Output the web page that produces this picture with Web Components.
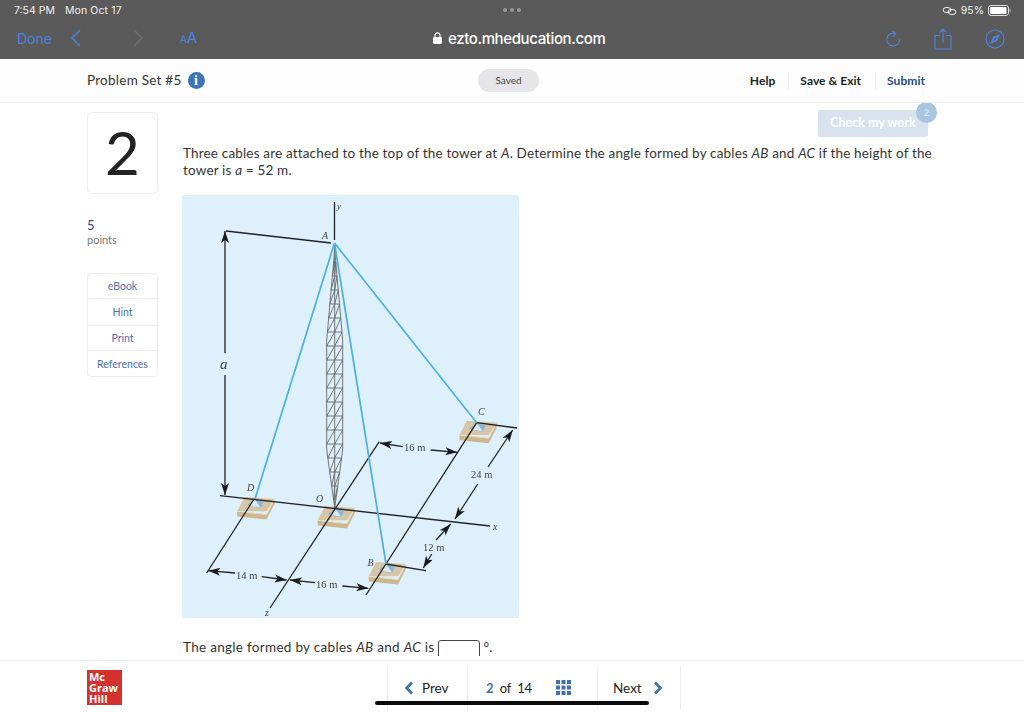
<!DOCTYPE html>
<html lang="en"><head><meta charset="utf-8"><title>Problem Set #5</title>
<style>
html,body{margin:0;padding:0;background:#fff}
body{width:1024px;height:712px;overflow:hidden;font-family:Lato,"Open Sans",sans-serif;color:#333}
</style></head><body>
<app-shell>
  <safari-bar slot="top"></safari-bar>
  <problem-header slot="top" title-text="Problem Set #5"></problem-header>
  <side-rail slot="rail" number="2" points="5"></side-rail>
  <question-body slot="body"></question-body>
  <footer-nav slot="foot"></footer-nav>
</app-shell>
<script>
function def(name,html,setup){
  customElements.define(name,class extends HTMLElement{
    constructor(){super();this.attachShadow({mode:'open'}).innerHTML=html;}
    connectedCallback(){if(setup)setup(this,this.shadowRoot);}
  });
}
def('app-shell',`<style>
:host{display:flex;flex-direction:column;width:1024px;height:712px;position:relative;overflow:hidden}
.main{flex:1;min-height:0;margin-bottom:4px;overflow:hidden;display:grid;grid-template-columns:71px 1fr;column-gap:25px;padding:0 93px 0 87px}
.home{position:absolute;left:375px;top:701px;width:274px;height:4px;border-radius:2px;background:#0b0b0b}
</style>
<slot name="top"></slot>
<div class="main"><slot name="rail"></slot><slot name="body"></slot></div>
<slot name="foot"></slot>
<div class="home"></div>`);

def('safari-bar',`<style>
:host{display:block;height:59px;background:#5a5a5a;color:#fff;font-family:Inter,"Liberation Sans",sans-serif;position:relative}
.status{height:21px;display:flex;align-items:center;font-size:10.5px;padding:0 14px;color:#f2f2f2}
.status .d{margin-left:10px;letter-spacing:.12px}
.dots{position:absolute;left:503px;top:8px;display:flex;gap:3px}
.dots i{width:4px;height:4px;border-radius:50%;background:#9a9a9a}
.right{margin-left:auto;display:flex;align-items:center;gap:4px;margin-right:-1px;font-size:10.5px}
.nav{height:38px;display:grid;grid-template-columns:433px auto 1fr;align-items:center}
.left{display:flex;align-items:center;color:#4a83e0;font-size:14px;padding-left:17px;height:34px;margin-top:-4px}
.url{display:flex;align-items:center;font-size:15px;font-weight:500;gap:6px;margin-top:-4px;letter-spacing:-.025em}
.acts{display:flex;justify-content:flex-end;align-items:center;gap:24px;padding-right:19px;margin-top:-3px}
svg{display:block}
.aa{margin-left:37px;display:flex;align-items:baseline;font-size:15px;line-height:18px}
.aa small{font-size:10px}
</style>
<div class="status"><span>7:54 PM</span><span class="d">Mon Oct 17</span>
 <div class="right">
  <svg width="15" height="10" viewBox="0 0 15 10" fill="none" stroke="#eee" stroke-width="1"><ellipse cx="5" cy="4" rx="4" ry="2.6"/><ellipse cx="10" cy="6" rx="4" ry="2.6"/></svg>
  <span>95%</span>
  <svg width="23" height="11" viewBox="0 0 23 11"><rect x=".5" y=".5" width="20" height="10" rx="2.5" fill="none" stroke="#ddd"/><rect x="2" y="2" width="16.5" height="7" rx="1" fill="#fff"/><rect x="21.5" y="4" width="1" height="3" fill="#bbb"/></svg>
 </div></div>
<div class="dots"><i></i><i></i><i></i></div>
<div class="nav">
 <div class="left"><span>Done</span>
  <svg style="margin-left:19px" width="10" height="18" viewBox="0 0 10 18" fill="none" stroke="#4a83e0" stroke-width="1.5"><path d="M9 1 1 9l8 8"/></svg>
  <svg style="margin-left:52px" width="10" height="18" viewBox="0 0 10 18" fill="none" stroke="#6e6e6e" stroke-width="1.5"><path d="M1 1l8 8-8 8"/></svg>
  <span class="aa"><small>A</small>A</span>
 </div>
 <div class="url"><svg width="9" height="12" viewBox="0 0 9 12"><path d="M2 5V3.4a2.5 2.5 0 0 1 5 0V5" fill="none" stroke="#fff" stroke-width="1.2"/><rect x="0" y="5" width="9" height="7" rx="1.2" fill="#fff"/></svg><span>ezto.mheducation.com</span></div>
 <div class="acts">
  <svg width="16" height="18" viewBox="0 0 16 18" fill="none" stroke="#4a83e0" stroke-width="1.2"><path d="M10.5 3.6A6.4 6.4 0 1 0 14.6 9.5"/><path d="M7.5 1l3.2 2.6L8 6.6"/></svg>
  <svg width="18" height="22" viewBox="0 0 18 22" fill="none" stroke="#4a83e0" stroke-width="1.2" style="margin-left:9px"><path d="M6 7.500H1v13.500h16V7.500h-5M9 14.500V1M5.500 4.500 9 1l3.500 3.500"/></svg>
  <svg width="20" height="20" viewBox="0 0 20 20" style="margin-left:9px"><circle cx="10" cy="10" r="9" fill="none" stroke="#4a83e0" stroke-width="1.200"/><path d="M15 5l-3 7-7 3 3-7z" fill="#4a83e0"/><circle cx="10" cy="10" r="1" fill="#5a5a5a"/></svg>
 </div>
</div>`);

def('problem-header',`<style>
:host{display:grid;grid-template-columns:391px 61px 1fr;align-items:center;height:43px;padding-left:87px;background:#fdfdfd;border-bottom:1px solid #eeeeee;box-sizing:content-box}
.t{display:flex;align-items:center;gap:6px;font-size:13.5px;color:#333;letter-spacing:.25px;margin-top:-1px}
.i{width:17px;height:17px;border-radius:50%;background:#3f73b8;color:#fff;font:700 14px/17px "Liberation Serif",serif;text-align:center;letter-spacing:0}
.p{height:23px;border-radius:12px;background:#e6e6e8;font-size:10px;line-height:23px;text-align:center;color:#444}
.a{display:flex;justify-content:flex-end;padding-right:99px;font-size:12px;font-weight:700;color:#222;letter-spacing:.05px}
.a span{display:block;line-height:16px;padding:0 14px 0 11px;border-right:1px solid #eee}
.a span:last-child{border:0;padding-right:0;color:#1f4a8c}
.a span:first-child{padding-left:0;padding-right:13px}
</style>
<div class="t"><span id="tt"></span><span class="i">i</span></div>
<div class="p">Saved</div>
<div class="a"><span>Help</span><span>Save &amp; Exit</span><span>Submit</span></div>`,
(h,s)=>{s.getElementById('tt').textContent=h.getAttribute('title-text');});

def('side-rail',`<style>
:host{display:block;padding-top:9px}
.n{box-sizing:border-box;height:82px;border:1px solid #eeeeee;border-radius:5px;font:400 60px/78px Lato,sans-serif;color:#222;text-align:center}
.pt{margin-top:23px;font-size:13px;line-height:16px;color:#1f4a8c}
.pl{font-size:11px;line-height:14px;color:#777}
.tools{margin-top:26px;border:1px solid #eeeeee;border-radius:4px;height:104px;box-sizing:border-box;display:grid;grid-template-rows:25px 27px 25px 1fr}
.tools span{display:flex;align-items:center;justify-content:center;font-size:10.5px;color:#4a72b8;border-bottom:1px solid #eeeeee}
.tools span:last-child{border:0}
</style>
<div class="n" id="n"></div>
<div class="pt" id="p"></div><div class="pl">points</div>
<div class="tools"><span>eBook</span><span>Hint</span><span>Print</span><span>References</span></div>`,
(h,s)=>{s.getElementById('n').textContent=h.getAttribute('number');s.getElementById('p').textContent=h.getAttribute('points');});

def('check-button',`<style>
:host{display:block;position:relative;width:110px;height:27px;box-sizing:border-box;background:#d8e3ef;border-radius:2px;color:#fff;font-size:12.5px;font-weight:700;line-height:25px;text-align:center}
.b{position:absolute;right:-9px;top:-8px;width:21px;height:21px;border-radius:50%;background:#a8c6e2;font-size:10px;line-height:21px;color:#d8e6f3}
</style><slot></slot><span class="b">2</span>`);

def('tower-figure',`<style>
:host{display:block;width:337px;height:423px}
svg{display:block;border-radius:2px}
.art{filter:blur(.35px)}
text{font-family:"Liberation Serif",serif;fill:#444}
.it{font-style:italic}
.dim{font-size:10.500px}
</style>
<svg width="337" height="423" viewBox="182 195 337 423">
<defs>
 <g id="pad">
  <path d="M-17.300 12.300-10-2 20 0 12 12.300z" fill="#d6c5a6"/>
  <path d="M-17.300 12.300 12 15.500 20 0v5L12 20.500-17.300 17.500z" fill="#cdb78f"/>
  <path d="M-17.300 12.300 12 15.500 20 0" fill="none" stroke="#e8dcc4" stroke-width="1"/>
  <path d="M-7 6 0 0 9 3 6 9 -1 8z" fill="#86b6d6"/>
  <path d="M0 0 6 8.500-5 7z" fill="#dce9f1"/>
 </g>
 <marker id="ah" markerWidth="13" markerHeight="8" refX="12" refY="4" orient="auto-start-reverse" markerUnits="userSpaceOnUse"><path d="M0 0 12 4 0 8 3 4z" fill="#1b1b1b"/></marker>
</defs>
<rect x="182" y="195" width="337" height="423" fill="#def0fc"/>
<g class="art">
<use href="#pad" x="254.500" y="499"/>
<use href="#pad" x="335" y="508"/>
<use href="#pad" x="386" y="564"/>
<use href="#pad" x="476.700" y="422.700"/>
<g id="tw" fill="none" stroke="#666" stroke-width=".9"></g>
<g fill="none" stroke="#222" stroke-width="1.300">
 <path d="M334.500 202V240M226 231 331 243"/>
 <path d="M225 231V353" marker-start="url(#ah)"/>
 <path d="M225 375V495" marker-end="url(#ah)"/>
 <path d="M220 495.700 490 526"/>
 <path d="M254 499 206.700 573"/>
 <path d="M379.300 441.700 270 608"/>
 <path d="M476.700 422.700 366 595M476.700 422.700 517 428"/>
 <path d="M386 564 426 570.700"/>
 <path d="M402.700 446.700 380 443" marker-end="url(#ah)"/>
 <path d="M430.700 450 457.300 452.300" marker-end="url(#ah)"/>
 <path d="M488 467 512.700 430" marker-end="url(#ah)"/>
 <path d="M477.700 484 455 519" marker-end="url(#ah)"/>
 <path d="M436 540 450.700 524" marker-end="url(#ah)"/>
 <path d="M431.700 554 423.300 568" marker-end="url(#ah)"/>
 <path d="M235 573 208.300 570.700" marker-end="url(#ah)"/>
 <path d="M261.700 576.700 286.700 580" marker-end="url(#ah)"/>
 <path d="M315 582.700 290 580" marker-end="url(#ah)"/>
 <path d="M342.300 586 368.300 588.300" marker-end="url(#ah)"/>
</g>
<g fill="none" stroke="#4bb0e3" stroke-width="1.700">
 <path d="M334.500 243 255 499M334.500 243 386 564M334.500 243 476.700 422.700"/>
</g>
</g>
<text class="it" x="337" y="209" font-size="9">y</text>
<text class="it" x="322" y="239" font-size="10">A</text>
<text class="it" x="220" y="369" font-size="15">a</text>
<text class="it" x="478" y="415" font-size="10">C</text>
<text class="it" x="247" y="491" font-size="10">D</text>
<text class="it" x="316" y="502" font-size="10">O</text>
<text class="it" x="367.500" y="566" font-size="10">B</text>
<text class="it" x="493" y="530" font-size="10">x</text>
<text class="it" x="265" y="616" font-size="10">z</text>
<text class="dim" x="404" y="451">16 m</text>
<text class="dim" x="471" y="478">24 m</text>
<text class="dim" x="423" y="551">12 m</text>
<text class="dim" x="236" y="579">14 m</text>
<text class="dim" x="316" y="588">16 m</text>
</svg>`,
(h,s)=>{
  const hw=y=>y<340?8*(y-250)/90:y<450?8:Math.max(0,8*(508-y)/58);
  const cx=334.7;let d='',y=250,step=14;
  const X=(y,k)=>cx+k*Math.max(0,hw(y));
  [-1,0,1].forEach(k=>{d+=`M334.600 245`;for(let yy=250;yy<=508;yy+=6)d+=`L${X(yy,k).toFixed(1)} ${yy}`;});
  for(y=262;y<495;y+=step){
    const y2=y+step;
    [[-1,0],[0,1]].forEach(([a,b])=>{
      d+=`M${X(y,a).toFixed(1)} ${y}L${X(y,b).toFixed(1)} ${y}`;
      d+=`M${X(y2,a).toFixed(1)} ${y2}L${X(y,b).toFixed(1)} ${y}`;
    });
  }
  const p=document.createElementNS('http://www.w3.org/2000/svg','path');
  p.setAttribute('d',d);s.getElementById('tw').appendChild(p);
});

def('question-body',`<style>
:host{display:block;padding-top:7px;min-width:0;color:#333}
.top{display:flex;justify-content:flex-end;height:27px;margin-right:3px}
p{margin:0;font-size:13.5px;line-height:17px;letter-spacing:.17px}
.q{margin-top:8px;width:756px}
tower-figure{margin:16px 0 0 -1px}
.ans{margin-top:21px;display:flex;align-items:flex-start;white-space:pre;letter-spacing:.3px}
.box{display:inline-block;width:42px;height:24px;margin-left:4px;margin-top:1px;box-sizing:border-box;border:1px solid #444;border-radius:3px}
.deg{margin-left:3px}
</style>
<div class="top"><check-button>Check my work</check-button></div>
<p class="q">Three cables are attached to the top of the tower at <em>A</em>. Determine the angle formed by cables <em>AB</em> and <em>AC</em> if the height of the tower is <em>a</em> = 52 m.</p>
<tower-figure></tower-figure>
<p class="ans"><span>The angle formed by cables <em>AB</em> and <em>AC</em> is</span><span class="box"></span><span class="deg">°.</span></p>`);

def('footer-nav',`<style>
:host{display:grid;grid-template-columns:300px 80px 130px 84px;height:51px;border-top:1px solid #eeeeee;padding-left:87px;font-size:13.5px;color:#222;box-sizing:content-box}
.logo{margin-top:9px;width:35px;height:35px;background:#d2322d;color:#fff;font:700 11px/11px "Open Sans",sans-serif;padding:1px 0 0 2px;box-sizing:border-box}
.c{display:flex;align-items:center;height:43px;margin-top:5px;border-left:1px solid #eeeeee;box-sizing:border-box}
.c:last-child{border-right:1px solid #eeeeee}
.pv{padding-left:16px;gap:8px}
.pg{padding-left:18px;font-size:13px;white-space:pre}
.pg b{color:#3f6fb5;font-size:13px}
.pg svg{margin-left:24px}
.pg span{letter-spacing:-.2px}
.nx{padding-left:15px;gap:11px}
</style>
<div><div class="logo">Mc<br>Graw<br>Hill</div></div>
<div class="c pv"><svg width="10" height="14" viewBox="0 0 10 14" fill="none" stroke="#3f6fb5" stroke-width="2.600"><path d="M8 1.500 2.500 7 8 12.500"/></svg><span>Prev</span></div>
<div class="c pg"><b>2</b><span>  of  14</span><svg width="15" height="15" viewBox="0 0 15 15" fill="#3f6fb5"><rect width="4" height="4"/><rect x="5.500" width="4" height="4"/><rect x="11" width="4" height="4"/><rect y="5.500" width="4" height="4"/><rect x="5.500" y="5.500" width="4" height="4"/><rect x="11" y="5.500" width="4" height="4"/><rect y="11" width="4" height="4"/><rect x="5.500" y="11" width="4" height="4"/><rect x="11" y="11" width="4" height="4"/></svg></div>
<div class="c nx"><span>Next</span><svg width="10" height="14" viewBox="0 0 10 14" fill="none" stroke="#3f6fb5" stroke-width="2.600"><path d="M2 1.500 7.500 7 2 12.500"/></svg></div>`);
</script>
</body></html>
